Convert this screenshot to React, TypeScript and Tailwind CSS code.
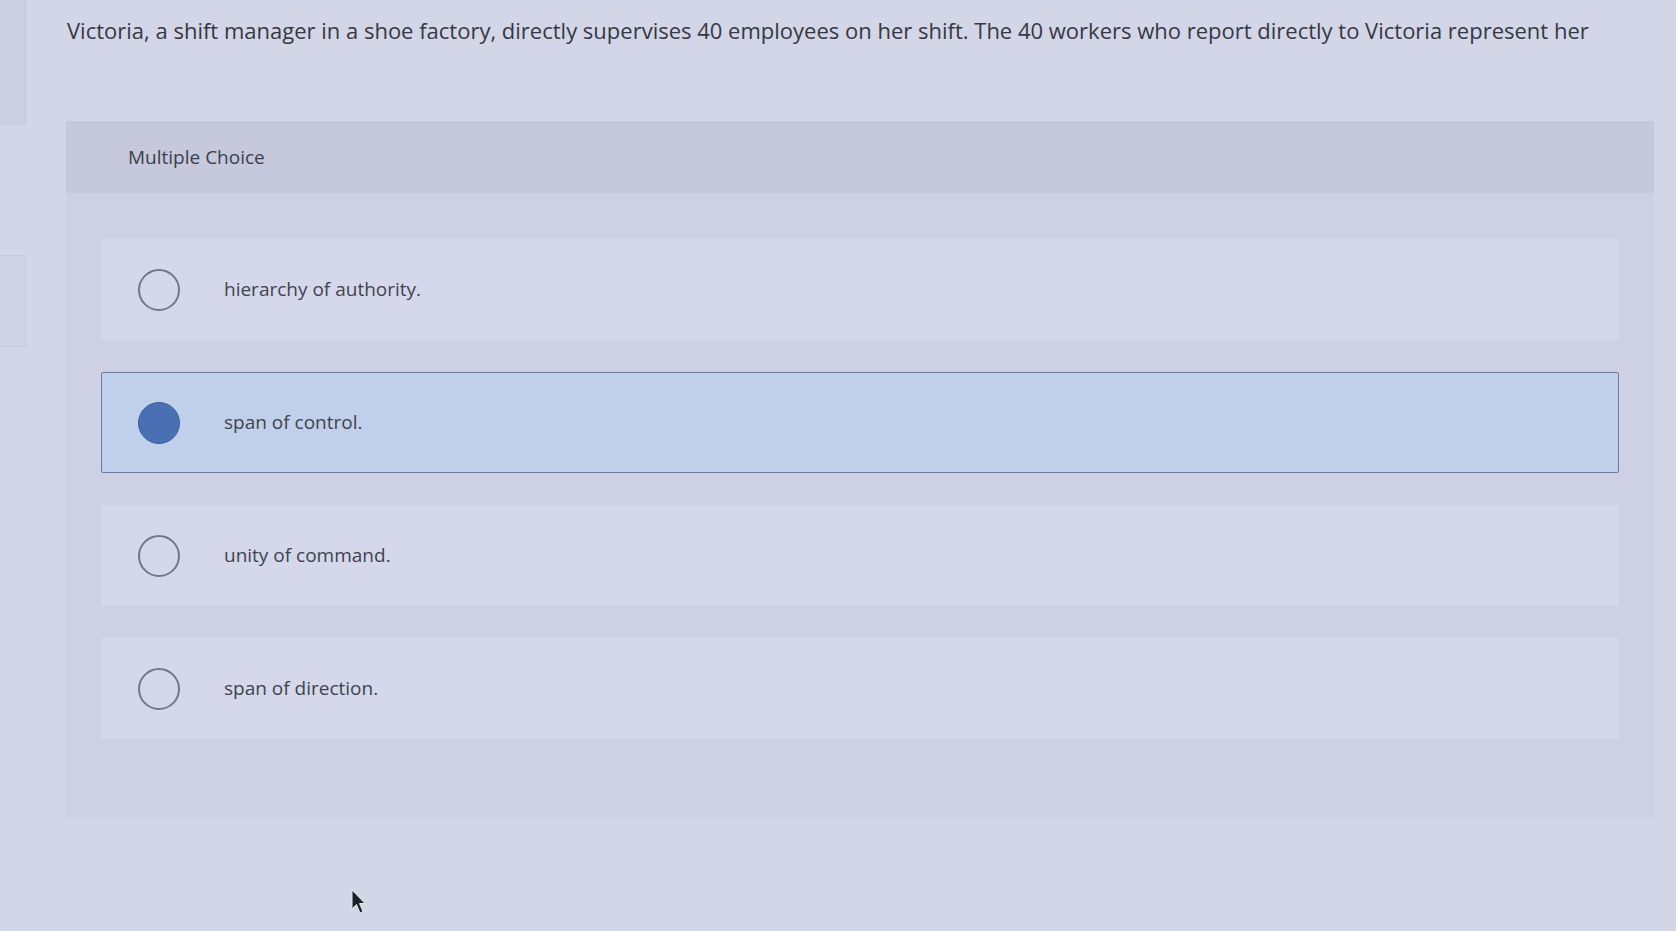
import React, { useState } from 'react';

const options = [
  'hierarchy of authority.',
  'span of control.',
  'unity of command.',
  'span of direction.',
];

const OptionRow = ({ label, selected, onSelect }) => {
  return (
    <div
      onClick={onSelect}
      className={`flex items-center h-[101px] pl-[36px] cursor-pointer ${
        selected ? 'bg-[#c1d0ea] border border-[#6d7ca6] rounded-[2px]' : 'bg-[#d4d8ea] border border-transparent'
      }`}
    >
      {selected ? (
        <div className="w-[42px] h-[42px] rounded-full bg-[#4b6fb3] border border-[#3f5e9c] shrink-0" />
      ) : (
        <div className="w-[42px] h-[42px] rounded-full border-2 border-[#737788] shrink-0" />
      )}
      <span className="ml-[44px] text-[19px] text-[#40434e]">{label}</span>
    </div>
  );
};

export default function App() {
  const [selected, setSelected] = useState(1);

  return (
    <div className="w-[1676px] h-[931px] bg-[#d2d6e7] overflow-hidden font-['Open_Sans','Lato',sans-serif] flex">
      {/* left screen edge */}
      <div className="w-[26px] flex flex-col shrink-0">
        <div className="h-[125px] bg-[#cbcfe0] border-r border-[#c3c7d8]" />
        <div className="h-[130px]" />
        <div className="h-[92px] border-r border-t border-b border-[#c6cadb] bg-[#cfd3e4]" />
      </div>

      <div className="flex-1 flex flex-col">
        <p className="mt-[15px] ml-[41px] text-[22px] text-[#363944] leading-[30px] whitespace-nowrap">
          Victoria, a shift manager in a shoe factory, directly supervises 40 employees on her shift. The 40 workers who report directly to Victoria represent her
        </p>

        <div className="mt-[76px] ml-[40px] w-[1588px] bg-[#cdd1e3] flex flex-col pb-[80px]">
          <div className="h-[72px] bg-[#c5c9db] flex items-center pl-[62px]">
            <span className="text-[19px] text-[#3d404c]">Multiple Choice</span>
          </div>

          <div className="flex flex-col gap-[32px] px-[35px] pt-[46px]">
            {options.map((opt, i) => (
              <OptionRow key={opt} label={opt} selected={selected === i} onSelect={() => setSelected(i)} />
            ))}
          </div>
        </div>

        {/* mouse pointer */}
        <svg className="mt-[70px] ml-[325px]" width="16" height="26" viewBox="0 0 16 26">
          <path d="M1 1 L1 20 L5.5 15.5 L9 24 L12 22.5 L8.5 14.5 L14 14.5 Z" fill="#1f2128" stroke="#e6e8f0" strokeWidth="1" />
        </svg>
      </div>
    </div>
  );
}
